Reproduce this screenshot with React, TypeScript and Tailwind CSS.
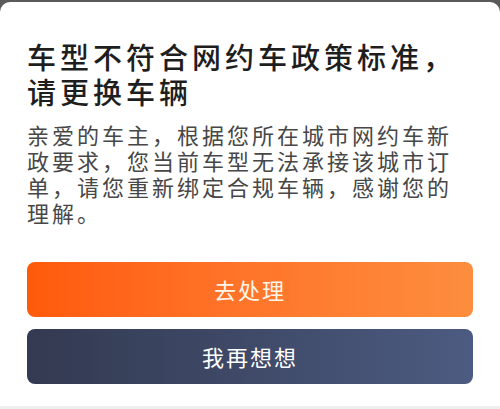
import React from "react";

export default function App() {
  return (
    <div
      className="w-[500px] h-[409px] bg-[#5a5a5a] flex flex-col overflow-hidden"
      style={{ fontFamily: '"Noto Sans CJK SC", "Noto Sans", sans-serif' }}
    >
      <div className="mt-[2px] flex-1 bg-white rounded-t-[10px] px-[27px] pt-[37px] flex flex-col">
        <h1 className="text-[29px] leading-[35px] tracking-[4px] text-[#1e1e1e] font-medium">
          车型不符合网约车政策标准，请更换车辆
        </h1>
        <p className="mt-[12px] text-[22px] leading-[26px] tracking-[3px] text-[#474747]">
          亲爱的车主，根据您所在城市网约车新政要求，您当前车型无法承接该城市订单，请您重新绑定合规车辆，感谢您的理解。
        </p>
        <div className="mt-[37px] flex flex-col gap-[12px]">
          <button className="h-[55px] w-full rounded-[8px] bg-gradient-to-r from-[#ff5a0a] to-[#fd8d3e] text-[#fff6ea] text-[22px] tracking-[2px]">
            去处理
          </button>
          <button className="h-[55px] w-full rounded-[8px] bg-gradient-to-r from-[#333a51] to-[#4c5b81] text-white text-[22px] tracking-[2px]">
            我再想想
          </button>
        </div>
      </div>
      <div className="h-[3px] bg-[#eeeeee]" />
    </div>
  );
}
